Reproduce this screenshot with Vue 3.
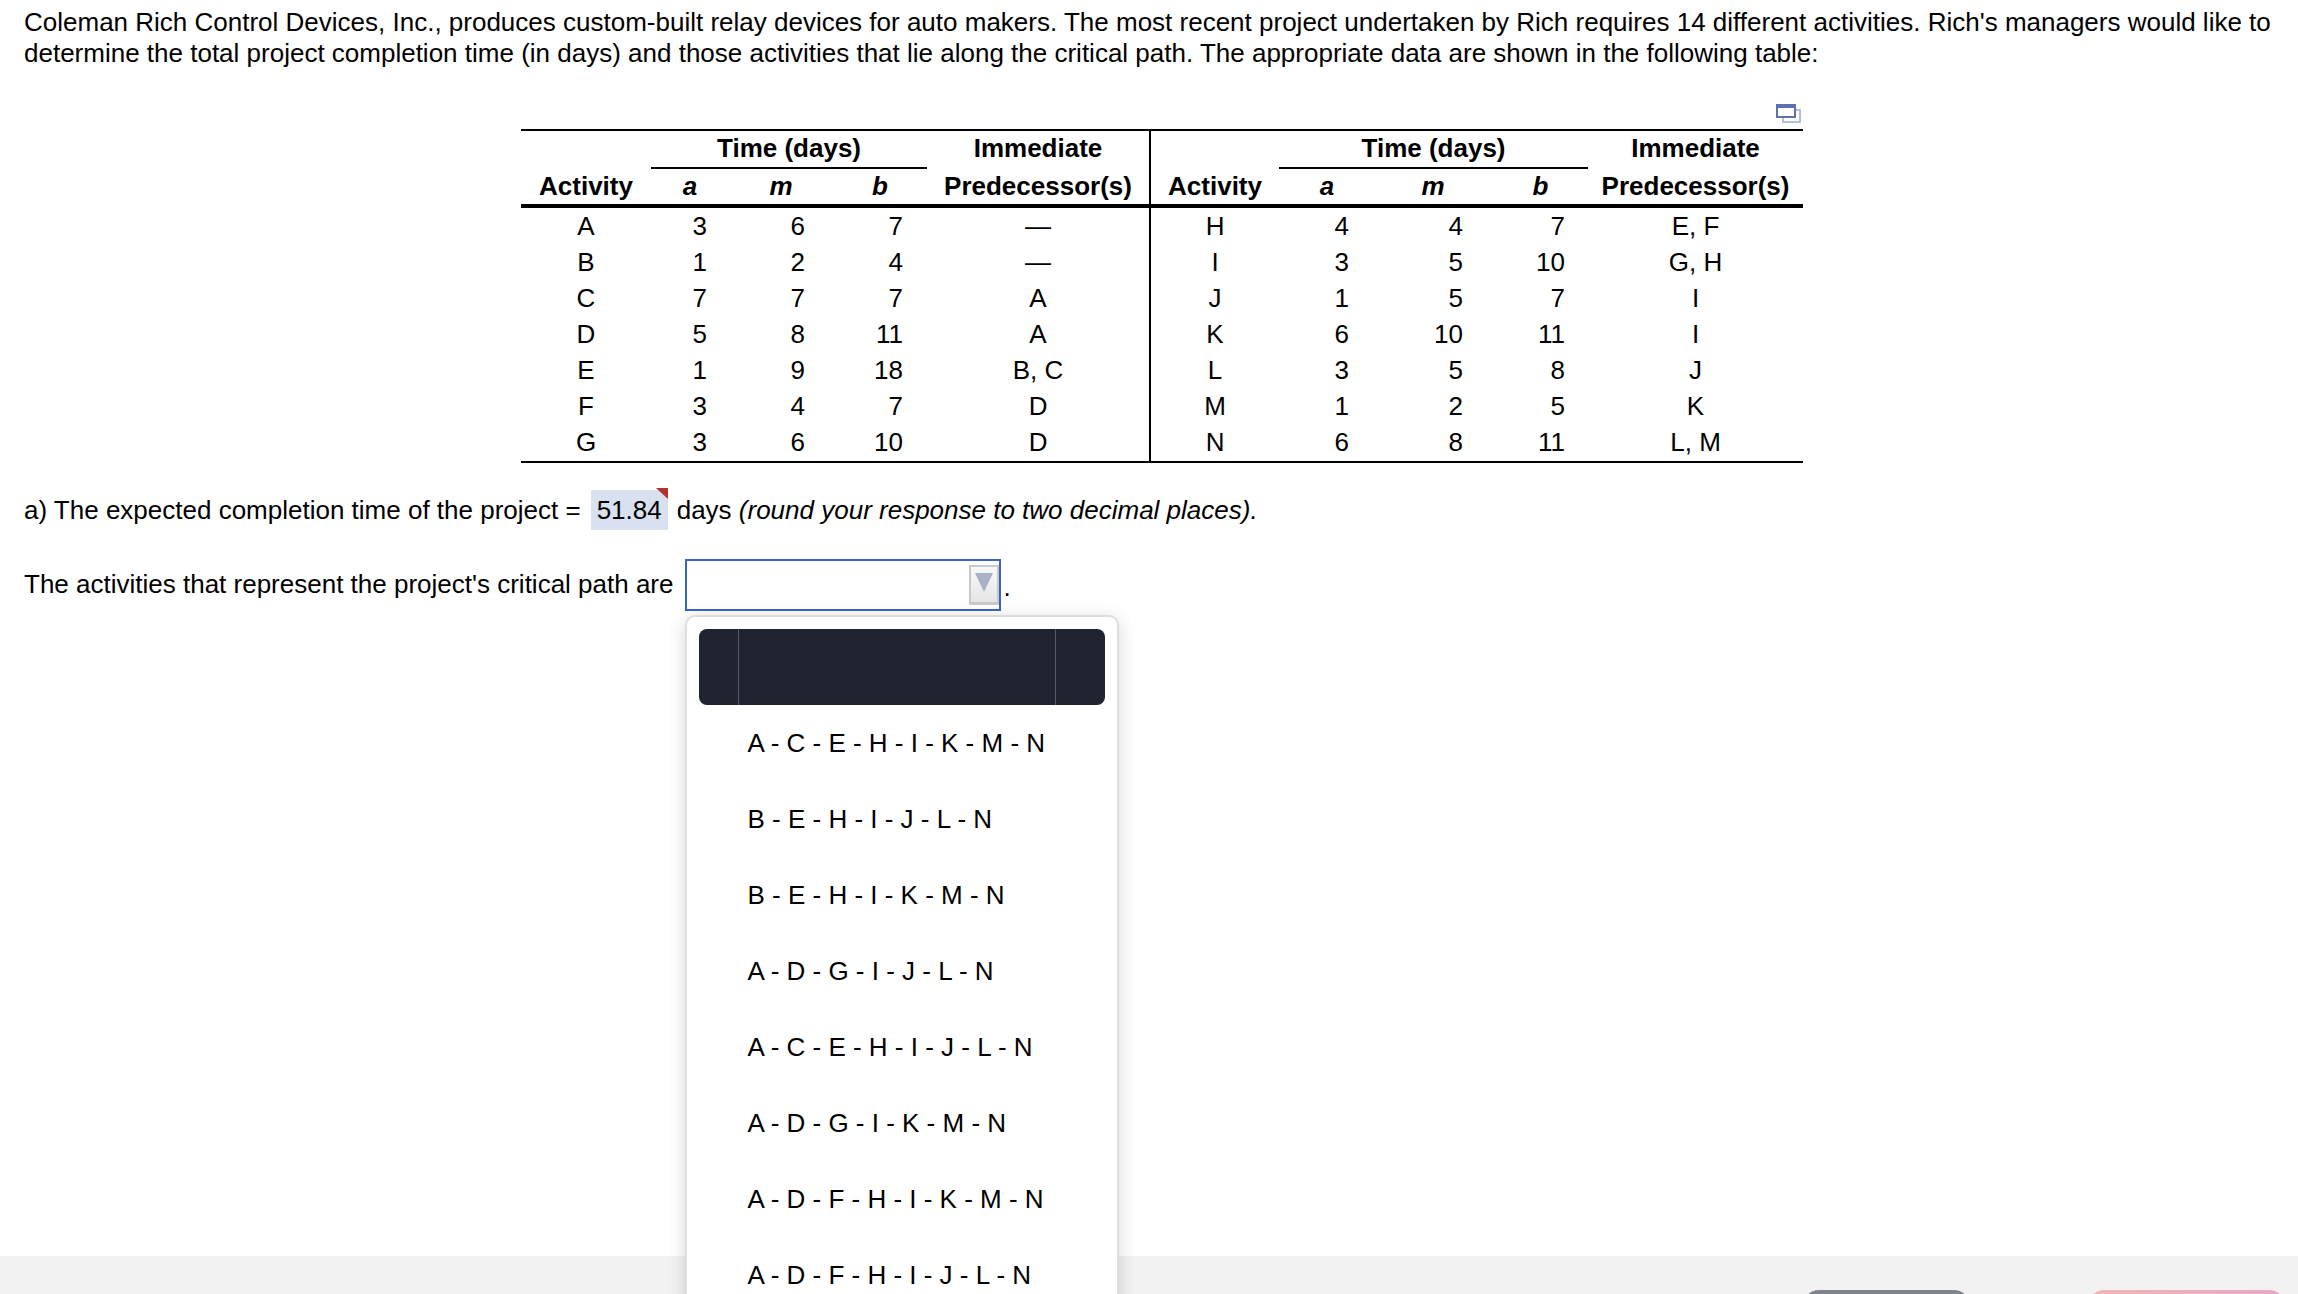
<script setup>
const left = [
  ['A', 3, 6, 7, '—'],
  ['B', 1, 2, 4, '—'],
  ['C', 7, 7, 7, 'A'],
  ['D', 5, 8, 11, 'A'],
  ['E', 1, 9, 18, 'B, C'],
  ['F', 3, 4, 7, 'D'],
  ['G', 3, 6, 10, 'D'],
]
const right = [
  ['H', 4, 4, 7, 'E, F'],
  ['I', 3, 5, 10, 'G, H'],
  ['J', 1, 5, 7, 'I'],
  ['K', 6, 10, 11, 'I'],
  ['L', 3, 5, 8, 'J'],
  ['M', 1, 2, 5, 'K'],
  ['N', 6, 8, 11, 'L, M'],
]
const rows = left.map((row, i) => [row, right[i]])
const options = [
  'A - C - E - H - I - K - M - N',
  'B - E - H - I - J - L - N',
  'B - E - H - I - K - M - N',
  'A - D - G - I - J - L - N',
  'A - C - E - H - I - J - L - N',
  'A - D - G - I - K - M - N',
  'A - D - F - H - I - K - M - N',
  'A - D - F - H - I - J - L - N',
]
</script>

<template>
  <div class="page">
    <main class="content">
      <p class="intro">
        Coleman Rich Control Devices, Inc., produces custom-built relay devices for auto makers. The most recent project undertaken by Rich requires 14 different activities. Rich's managers would like to<br />
        determine the total project completion time (in days) and those activities that lie along the critical path. The appropriate data are shown in the following table:
      </p>

      <div class="table-wrap">
        <div class="toolbar">
          <svg width="25" height="19" viewBox="0 0 25 19">
            <rect x="7" y="6" width="17" height="12" fill="none" stroke="#b4bfdc" stroke-width="2" />
            <rect x="1" y="1" width="18" height="12" fill="#fff" stroke="#5f70b2" stroke-width="2" />
            <rect x="1" y="1" width="18" height="3" fill="#5f70b2" />
          </svg>
        </div>
        <table class="data">
          <colgroup>
            <col class="c-act" />
            <col class="c-a" />
            <col class="c-m" />
            <col class="c-b" />
            <col class="c-pred" />
            <col class="c-act2" />
            <col class="c-a2" />
            <col class="c-m2" />
            <col class="c-b2" />
            <col class="c-pred2" />
          </colgroup>
          <thead>
            <tr class="head-top">
              <th></th>
              <th colspan="3" class="span">Time (days)</th>
              <th class="divide">Immediate</th>
              <th></th>
              <th colspan="3" class="span">Time (days)</th>
              <th>Immediate</th>
            </tr>
            <tr class="head-sub">
              <th>Activity</th>
              <th><em>a</em></th>
              <th><em>m</em></th>
              <th><em>b</em></th>
              <th class="divide">Predecessor(s)</th>
              <th>Activity</th>
              <th class="a2"><em>a</em></th>
              <th><em>m</em></th>
              <th><em>b</em></th>
              <th>Predecessor(s)</th>
            </tr>
          </thead>
          <tbody>
            <tr v-for="([l, r], i) in rows" :key="i">
              <td>{{ l[0] }}</td>
              <td class="num n1">{{ l[1] }}</td>
              <td class="num n2">{{ l[2] }}</td>
              <td class="num n3">{{ l[3] }}</td>
              <td class="divide">{{ l[4] }}</td>
              <td>{{ r[0] }}</td>
              <td class="num n4">{{ r[1] }}</td>
              <td class="num n5">{{ r[2] }}</td>
              <td class="num n6">{{ r[3] }}</td>
              <td>{{ r[4] }}</td>
            </tr>
          </tbody>
        </table>
      </div>

      <div class="answer-line">
        <span>a) The expected completion time of the project =</span>
        <span class="answer">51.84<i class="flag"></i></span>
        <span>days <em>(round your response to two decimal places).</em></span>
      </div>

      <div class="path-line">
        <span>The activities that represent the project's critical path are</span>
        <div class="select-wrap">
          <div class="select">
            <div class="select-btn"><i class="arrow"></i></div>
          </div>
          <div class="menu">
            <div class="menu-head">
              <div></div>
              <div></div>
              <div></div>
            </div>
            <div v-for="opt in options" :key="opt" class="option">{{ opt }}</div>
          </div>
        </div>
        <span class="dot">.</span>
      </div>
    </main>

    <footer class="footer">
      <div class="btn grey"></div>
      <div class="btn pink"></div>
    </footer>
  </div>
</template>

<style>
html, body {
  margin: 0;
  background: #fff;
}
</style>

<style scoped>
.page {
  height: 1294px;
  overflow: hidden;
  display: flex;
  flex-direction: column;
  font-family: "Liberation Sans", Arial, sans-serif;
  font-size: 26px;
  color: #000;
}
.content {
  flex: 1;
  min-height: 0;
  position: relative;
  z-index: 1;
}
.intro {
  margin: 0;
  padding: 7px 0 0 24px;
  line-height: 31px;
  white-space: nowrap;
}
.table-wrap {
  width: 1282px;
  margin: 35px 0 0 521px;
}
.toolbar {
  height: 19px;
  margin-bottom: 6px;
  padding-right: 2px;
  display: flex;
  justify-content: flex-end;
}
.toolbar svg {
  display: block;
}
.data {
  width: 1282px;
  table-layout: fixed;
  border-collapse: separate;
  border-spacing: 0;
  border-top: 2px solid #000;
  border-bottom: 2px solid #000;
  font-size: 26px;
}
.c-act { width: 130px; }
.c-a { width: 78px; }
.c-m { width: 104px; }
.c-b { width: 94px; }
.c-pred { width: 224px; }
.c-act2 { width: 128px; }
.c-a2 { width: 94px; }
.c-m2 { width: 120px; }
.c-b2 { width: 95px; }
.c-pred2 { width: 215px; }
.data th,
.data td {
  padding: 0;
  text-align: center;
}
.data th {
  font-weight: 700;
}
.data th.a2 {
  padding-left: 2px;
}
.head-top th {
  box-sizing: border-box;
  height: 38px;
  line-height: 34px;
  vertical-align: top;
}
.head-sub th {
  height: 35px;
  line-height: 35px;
  border-bottom: 4px solid #000;
}
.data th.span {
  border-bottom: 2px solid #000;
}
.data td {
  height: 36px;
  line-height: 36px;
}
.data tbody tr:last-child td {
  padding-bottom: 1px;
}
.divide {
  border-right: 2px solid #000;
}
.data td.num {
  text-align: right;
}
.data td.n1 { padding-right: 22px; }
.data td.n2 { padding-right: 28px; }
.data td.n3 { padding-right: 24px; }
.data td.n4 { padding-right: 24px; }
.data td.n5 { padding-right: 30px; }
.data td.n6 { padding-right: 23px; }

.answer-line {
  margin: 27px 0 0 24px;
  height: 40px;
  display: flex;
  align-items: center;
  white-space: nowrap;
}
.answer {
  position: relative;
  margin: 0 9px 0 10px;
  width: 77px;
  height: 40px;
  line-height: 40px;
  text-align: center;
  background: #d9e1f0;
}
.flag {
  position: absolute;
  top: -2px;
  right: 0;
  width: 0;
  height: 0;
  border-top: 11px solid #b5332a;
  border-left: 12px solid transparent;
}
.path-line {
  margin: 29px 0 0 24px;
  display: flex;
  align-items: center;
  white-space: nowrap;
}
.path-line > span:first-child {
  margin-top: -2px;
}
.select-wrap {
  position: relative;
  margin-left: 11px;
}
.select {
  box-sizing: border-box;
  width: 316px;
  height: 52px;
  border: 2px solid #3b64c5;
  background: #fff;
  padding: 4px 0 0 282px;
}
.select-btn {
  box-sizing: border-box;
  width: 30px;
  height: 40px;
  border: 2px solid #c9c9c9;
  border-bottom-width: 3px;
  background: linear-gradient(#f8f8f8, #e6e6e6);
  display: flex;
  justify-content: center;
  padding-top: 6px;
}
.arrow {
  width: 0;
  height: 0;
  border-top: 19px solid #a9b1c4;
  border-left: 9.5px solid transparent;
  border-right: 9.5px solid transparent;
}
.dot {
  margin-left: 3px;
  margin-top: 4px;
}
.menu {
  position: absolute;
  top: 56px;
  left: 0;
  box-sizing: border-box;
  width: 434px;
  padding: 12px 12px 0;
  background: #fff;
  border: 2px solid #ddd;
  border-radius: 10px;
  box-shadow: 0 4px 18px rgba(0, 0, 0, 0.16);
}
.menu-head {
  height: 76px;
  display: grid;
  grid-template-columns: 39px 1fr 50px;
  background: #1f2430;
  border-radius: 8px;
  overflow: hidden;
}
.menu-head div + div {
  border-left: 1px solid #555a65;
}
.option {
  height: 76px;
  line-height: 76px;
  padding-left: 49px;
  white-space: nowrap;
  font-size: 26px;
}
.footer {
  flex: none;
  height: 38px;
  background: #f2f2f2;
  padding: 34px 13px 0 0;
  box-sizing: border-box;
  display: flex;
  justify-content: flex-end;
  gap: 118px;
}
.btn {
  height: 44px;
  border-radius: 16px;
  flex: none;
}
.grey {
  width: 167px;
  background: #80848f;
}
.pink {
  width: 197px;
  background: linear-gradient(90deg, #edb8b4, #e6a8c8);
}
</style>
